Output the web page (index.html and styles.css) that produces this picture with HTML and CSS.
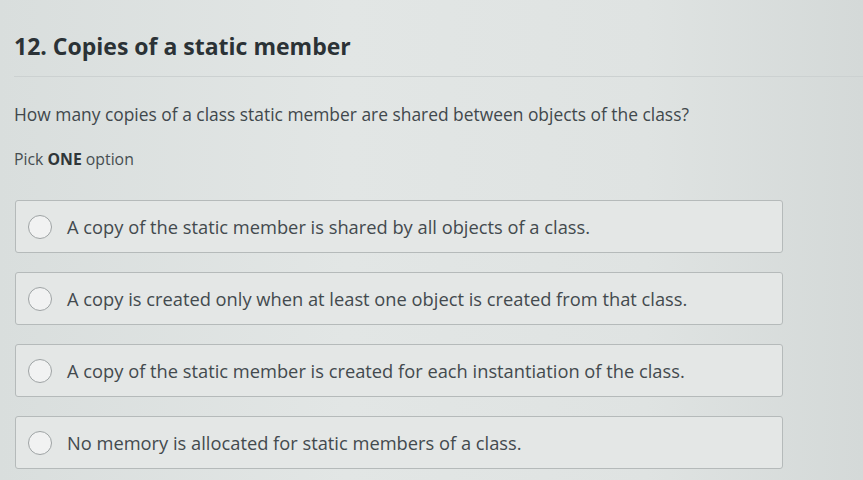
FILE: index.html
```html
<!DOCTYPE html>
<html>
<head>
<meta charset="utf-8">
<link rel="stylesheet" href="styles.css">
</head>
<body>
<div class="page">
  <header class="head">
    <h1 class="title">12. Copies of a static member</h1>
  </header>
  <p class="question">How many copies of a class static member are shared between objects of the class?</p>
  <p class="pick">Pick <b>ONE</b> option</p>
  <ul class="options">
    <li class="option"><span class="radio"></span><span class="label">A copy of the static member is shared by all objects of a class.</span></li>
    <li class="option"><span class="radio"></span><span class="label">A copy is created only when at least one object is created from that class.</span></li>
    <li class="option"><span class="radio"></span><span class="label">A copy of the static member is created for each instantiation of the class.</span></li>
    <li class="option"><span class="radio"></span><span class="label">No memory is allocated for static members of a class.</span></li>
  </ul>
</div>
</body>
</html>
```
FILE: styles.css
```css
html, body {
  margin: 0;
  padding: 0;
}
body {
  width: 863px;
  height: 480px;
  overflow: hidden;
  background: linear-gradient(90deg, #d9dedd 0%, #e2e6e5 40%, #dfe3e2 75%, #d4d9d8 100%);
  font-family: "Open Sans", "Noto Sans", sans-serif;
  color: #3d4448;
}
.page {
  padding: 0 0 0 14px;
}
.head {
  padding-top: 31px;
  height: 45px;
  border-bottom: 1px solid #ccd1d1;
}
.title {
  margin: 0;
  font-size: 23px;
  line-height: 30px;
  font-weight: 700;
  color: #2b3236;
}
.question {
  margin: 25px 0 0 0;
  font-size: 17.4px;
  line-height: 24px;
  color: #41484c;
}
.pick {
  margin: 22px 0 0 0;
  font-size: 15.8px;
  line-height: 22px;
  color: #464d51;
}
.pick b {
  font-weight: 700;
  color: #2f3639;
}
.options {
  list-style: none;
  margin: 30px 0 0 1px;
  padding: 0;
  display: flex;
  flex-direction: column;
  gap: 19px;
  width: 768px;
}
.option {
  height: 53px;
  box-sizing: border-box;
  border: 1px solid #b5baba;
  border-radius: 3px;
  background: #e4e7e6;
  display: flex;
  align-items: center;
  padding-left: 12px;
}
.radio {
  width: 24px;
  height: 24px;
  box-sizing: border-box;
  border: 1px solid #9ea3a4;
  border-radius: 50%;
  background: #f1f2f2;
  flex: none;
}
.label {
  margin-left: 15px;
  font-size: 18.3px;
  color: #434a4e;
}
```
